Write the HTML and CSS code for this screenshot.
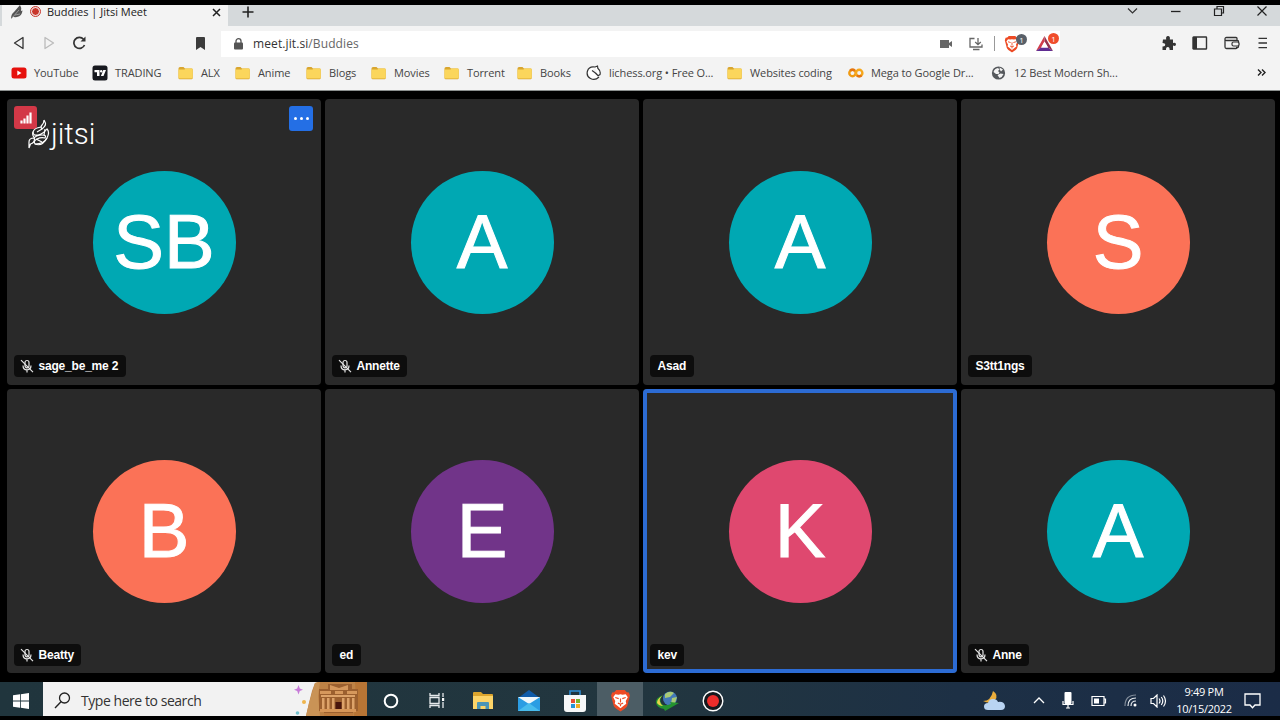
FILE: index.html
```html
<!DOCTYPE html>
<html lang="en">
<head>
    <meta charset="UTF-8">
    <meta name="viewport" content="width=device-width, initial-scale=1.0">
    <title>Buddies | Jitsi Meet</title>
    <link rel="stylesheet" href="styles.css">
</head>
<body>

    <!-- Shared icons -->
    <svg class="defs" width="0" height="0">
        <symbol id="folder" viewBox="0 0 16 14">
            <path d="M.5 2.500Q.5 1 2 1h3.500L7 2.500h6.500q1.200 0 1.200 1.200V12q0 1.200-1.200 1.200H1.700Q.5 13.200.5 12z" fill="#d9a62f"/>
            <path d="M.5 3.400h6l1-.8h6.200q1 0 1 1v7.800q0 1-1 1H1.500q-1 0-1-1z" fill="#fbd65c"/>
        </symbol>
        <symbol id="muted" viewBox="0 0 14 14">
            <g fill="none" stroke="#e6e6e6" stroke-width="1.2">
                <path d="M5 6V3.5a2 2 0 0 1 4 0V7q0 1.8-2 1.8Q5 8.8 5 6z"/>
                <path d="M3 6.5q0 4.3 4 4.3 4 0 4-4.3M7 10.8v2.7M1 1.2l12 12"/>
            </g>
        </symbol>
        <symbol id="lion" viewBox="0 0 20 22">
            <path d="M6 1h8l2 2 2 .3 1 3-.5 2L16.500 16q-.6 2-6.500 5.500Q4.100 18 3.500 16L1.500 8.300 1 6.300l1-3L4 3z" fill="#ed4a24"/>
            <path d="M5 5l3 .5 2-.5 2 .5 3-.5 2 3-2 3.500.5 2.500-2.500 2-3 2.500-3-2.500-2.500-2L5 11.500 3 8z" fill="#fff"/>
            <path d="M5 8.200l3.300 1M15 8.200l-3.300 1M10 9v4M7.500 13.500l2.500 1 2.500-1M10 14.500v2" fill="none" stroke="#ed4a24" stroke-width="1.100"/>
        </symbol>
    </svg>

    <header class="browser">
        <div class="tab-strip">
            <div class="tab">
                <svg class="feather" width="12" height="14" viewBox="0 0 12 14"><path d="M0 14Q0 9 3 7L9 0q2 3 1 6l1.500-.5Q11 11 6 12q-3 .500-4-.5z" fill="#555"/><path d="M1 13l7-8M4 10l5-1" stroke="#aaa" stroke-width=".8"/></svg>
                <span class="recording"></span>
                <span class="tab-title">Buddies | Jitsi Meet</span>
                <svg class="tab-close" width="9" height="9" viewBox="0 0 9 9"><path d="M1 1l7 7M8 1L1 8" stroke="#222" stroke-width="1.5"/></svg>
            </div>
            <svg class="new-tab" width="12" height="12" viewBox="0 0 12 12"><path d="M6 .5v11M.5 6h11" stroke="#222" stroke-width="1.600"/></svg>
            <div class="window-buttons">
                <svg width="12" height="12" viewBox="0 0 12 12"><path d="M1 3.500L5.500 8l4.500-4.500" fill="none" stroke="#333" stroke-width="1.200"/></svg>
                <svg width="12" height="12" viewBox="0 0 12 12"><path d="M1 6.500h9.500" stroke="#222" stroke-width="1.300"/></svg>
                <svg width="12" height="12" viewBox="0 0 12 12"><path d="M1.500 4h7v6.500h-7zM4 4V1.500h6.500V8H8.500" fill="none" stroke="#222" stroke-width="1.200"/></svg>
                <svg width="12" height="12" viewBox="0 0 12 12"><path d="M1.500 1.500l9 9M10.500 1.500l-9 9" stroke="#222" stroke-width="1.200"/></svg>
            </div>
        </div>

        <div class="toolbar">
            <div class="nav-buttons">
                <svg width="12" height="14" viewBox="0 0 12 14"><path d="M10 1.500v11L1.500 7z" fill="none" stroke="#333" stroke-width="1.300" stroke-linejoin="round"/></svg>
                <svg width="12" height="14" viewBox="0 0 12 14"><path d="M2 1.500v11L10.500 7z" fill="none" stroke="#bbb" stroke-width="1.300" stroke-linejoin="round"/></svg>
                <svg width="14" height="14" viewBox="0 0 14 14"><path d="M11.500 9A5.500 5.500 0 1 1 10.500 3.200" fill="none" stroke="#333" stroke-width="1.700"/><path d="M12.500 .5v5h-5z" fill="#333"/></svg>
            </div>
            <svg class="bookmark" width="9" height="13" viewBox="0 0 9 13"><path d="M0 1q0-1 1-1h7q1 0 1 1v12L4.500 10 0 13z" fill="#3b3b3b"/></svg>
            <div class="address">
                <svg width="9" height="12" viewBox="0 0 9 12"><rect y="4.500" width="9" height="7" rx="1" fill="#555"/><path d="M2 5V3a2.500 2.300 0 0 1 5 0v2" fill="none" stroke="#555" stroke-width="1.300"/></svg>
                <span class="url">meet.jit.si<span>/Buddies</span></span>
                <div class="address-icons">
                    <svg width="13" height="10" viewBox="0 0 13 10"><path d="M0 1h9v2.900L12 2v6L9 6v3H0z" fill="#666"/></svg>
                    <svg class="install" width="14" height="14" viewBox="0 0 14 14"><path d="M5.500 1.500H1v8.500h12V7.500M4 12.500h6.500M9 1v6.500M6.200 5L9 7.700 11.800 5" fill="none" stroke="#666" stroke-width="1.300"/></svg>
                    <span class="divider"></span>
                    <div class="badged shield">
                        <svg width="16" height="18" viewBox="0 0 20 22"><use href="#lion"/></svg>
                        <span class="badge">1</span>
                    </div>
                    <div class="badged rewards">
                        <svg width="17" height="15" viewBox="0 0 17 15"><path d="M8.500 0L0 15l5.500-3.500 3-6z" fill="#d13d4b"/><path d="M0 15h17l-5-3.500H5z" fill="#5f2c92"/><path d="M8.500 0L17 15l-5-3.500-3.500-6z" fill="#96334f"/><path d="M8.500 5.500L12 11.500H5z" fill="#fff"/></svg>
                        <span class="badge badge-red">1</span>
                    </div>
                </div>
            </div>
            <div class="tools">
                <svg width="14" height="14" viewBox="0 0 14 14"><path d="M1 3.500h3.200Q3.500 0 6 0t1.800 3.500H11V7q3-1 3 1.300T11 9.600V14H7.600q.2-3-1.800-3t-1.800 3H.5v-3.500q2.800.2 2.800-1.700T.5 7z" fill="#333"/></svg>
                <svg width="16" height="14" viewBox="0 0 16 14"><rect x="1" y="1" width="13.500" height="12" rx=".5" fill="none" stroke="#333" stroke-width="1.400"/><path d="M1 1h4v12H1z" fill="#333"/></svg>
                <svg width="16" height="14" viewBox="0 0 16 14"><path d="M13 4V2.500Q13 1.500 12 1.500H2.500Q1 1.500 1 3v8q0 1.500 1.500 1.500H12q1 0 1-1V11M1 3.500q0 1 1.500 1h11q1 0 1 1v5q0 1-1 1H12" fill="none" stroke="#333" stroke-width="1.300"/><rect x="8" y="6" width="7" height="4" rx="1.500" fill="#f3f3f3" stroke="#333" stroke-width="1.200"/></svg>
                <svg class="hamburger" width="12" height="14" viewBox="0 0 12 14"><path d="M1.500 2.300h8.500M1.500 7h8.500M1.500 11.700h8.500" stroke="#333" stroke-width="1.300"/></svg>
            </div>
        </div>

        <nav class="bookmarks">
            <a class="mark"><svg width="16" height="14" viewBox="0 0 16 14"><rect x=".5" y="1.500" width="15" height="11" rx="2.500" fill="#e6100c"/><path d="M6.300 4.500L10.500 7l-4.200 2.500z" fill="#fff"/></svg><span>YouTube</span></a>
            <a class="mark"><svg width="16" height="16" viewBox="0 0 16 16"><rect x=".5" y=".5" width="15" height="15" rx="2.500" fill="#17191f"/><path d="M2.500 5h5v6H5V7.300H2.500zM11.300 5H14l-2.500 6H8.900z" fill="#fff"/><circle cx="9.200" cy="6.200" r="1.200" fill="#fff"/></svg><span>TRADING</span></a>
            <a class="mark"><svg width="16" height="14"><use href="#folder"/></svg><span>ALX</span></a>
            <a class="mark"><svg width="16" height="14"><use href="#folder"/></svg><span>Anime</span></a>
            <a class="mark"><svg width="16" height="14"><use href="#folder"/></svg><span>Blogs</span></a>
            <a class="mark"><svg width="16" height="14"><use href="#folder"/></svg><span>Movies</span></a>
            <a class="mark"><svg width="16" height="14"><use href="#folder"/></svg><span>Torrent</span></a>
            <a class="mark"><svg width="16" height="14"><use href="#folder"/></svg><span>Books</span></a>
            <a class="mark"><svg width="16" height="16" viewBox="0 0 16 16"><path d="M9 2Q3 1 1.500 6t3 7.500Q9 16 13 12M9 2l2.500-1 .3 2.200Q15 6 14 9.500l-2 1.200Q10 8 6 5.500" fill="#fff" stroke="#333" stroke-width="1.200"/></svg><span>lichess.org • Free O...</span></a>
            <a class="mark"><svg width="16" height="14"><use href="#folder"/></svg><span>Websites coding</span></a>
            <a class="mark"><svg width="16" height="14" viewBox="0 0 16 14"><g fill="none" stroke-width="2.400"><circle cx="4.500" cy="7" r="3.200" stroke="#f09a12"/><circle cx="11.200" cy="7" r="3.200" stroke="#f6a71b"/><path d="M8.900 9.300a3.200 3.200 0 0 0 4.600 0M2.200 4.700a3.200 3.200 0 0 1 4.600 0" stroke="#e57411"/></g></svg><span>Mega to Google Dr...</span></a>
            <a class="mark"><svg width="16" height="16" viewBox="0 0 16 16"><circle cx="7.500" cy="8" r="6.600" fill="#55585c"/><path d="M2.500 7Q3.500 3.500 7 3l1.500 1.500L7 6l1.500 1.500-1 1.500H5zM8.500 2.500l3.500 2-2 2L9 5zM6.500 10l3-1.500 3 .5q-1 3-4 4z" fill="#f3f3f3"/></svg><span>12 Best Modern Sh...</span></a>
            <svg class="more" width="9" height="9" viewBox="0 0 9 9"><path d="M1 1.500l3 3-3 3M5 1.500l3 3-3 3" fill="none" stroke="#222" stroke-width="1.400"/></svg>
        </nav>
    </header>

    <main class="tiles">
        <section class="tile">
            <div class="signal"><svg width="14" height="14" viewBox="0 0 14 14"><path d="M2.500 9.500v3M5.500 7.500v5M8.500 4.500v8M11.500 1.500v11" stroke="#fff" stroke-width="2.200"/></svg></div>
            <div class="logo">
                <svg width="24" height="32" viewBox="0 0 24 32"><g fill="none" stroke="#fff" stroke-width="1.200"><path d="M17 2q0 3-2 5t0 4q5-4 3-7l-1-2"/><path d="M14 9q-7 1-8 5 0 4 5 3t9-6q3 3 0 9t-12 6q-2-3 2-5t8-1q2-3-3-3t-8 3"/><path d="M6 14q-1 3 1 5M7 20q-5 0-5 4l0 6 1.500-4q4-1 4-5zM8 26q7 3 12-6M10 14l5-3M18 11l-1 6M9 21l6 3"/></g></svg>
                <span>jitsi</span>
            </div>
            <div class="menu"><i></i><i></i><i></i></div>
            <div class="avatar teal">SB</div>
            <div class="name"><svg width="14" height="14"><use href="#muted"/></svg><span>sage_be_me 2</span></div>
        </section>
        <section class="tile">
            <div class="avatar teal">A</div>
            <div class="name"><svg width="14" height="14"><use href="#muted"/></svg><span>Annette</span></div>
        </section>
        <section class="tile">
            <div class="avatar teal">A</div>
            <div class="name"><span>Asad</span></div>
        </section>
        <section class="tile">
            <div class="avatar orange">S</div>
            <div class="name"><span>S3tt1ngs</span></div>
        </section>
        <section class="tile lower">
            <div class="avatar orange">B</div>
            <div class="name"><svg width="14" height="14"><use href="#muted"/></svg><span>Beatty</span></div>
        </section>
        <section class="tile lower">
            <div class="avatar purple">E</div>
            <div class="name"><span>ed</span></div>
        </section>
        <section class="tile lower active">
            <div class="avatar pink">K</div>
            <div class="name"><span>kev</span></div>
        </section>
        <section class="tile lower">
            <div class="avatar teal">A</div>
            <div class="name"><svg width="14" height="14"><use href="#muted"/></svg><span>Anne</span></div>
        </section>
    </main>

    <footer class="taskbar">
        <div class="start"><svg width="16" height="16" viewBox="0 0 16 16"><path d="M0 2.300L7 1.300v6.300H0zM7.800 1.200L16 0v7.600H7.800zM0 8.400h7v6.300l-7-1zM7.800 8.400H16V16l-8.200-1.200z" fill="#fff"/></svg></div>
        <div class="search">
            <svg width="17" height="17" viewBox="0 0 17 17"><circle cx="10.500" cy="6" r="5" fill="none" stroke="#222" stroke-width="1.300"/><path d="M7 9.800L1 16" stroke="#222" stroke-width="1.400"/></svg>
            <span>Type here to search</span>
            <svg class="highlight" width="74" height="34" viewBox="0 0 74 34">
                <path d="M5.500 3l1.300 3.500L10 7.800 6.800 9l-1.300 3.500L4.200 9 1 7.800l3.200-1.300z" fill="#c77bd8"/>
                <circle cx="11" cy="20" r="2" fill="#efb54c"/><circle cx="4.500" cy="31" r="1.800" fill="#75c2ce"/>
                <path d="M13 34l3-13 3-12 3-8 3-1h49v34z" fill="#be8245"/>
                <path d="M22 1l5-1-2 14 2 20H13l3-13z" fill="#c99356"/>
                <path d="M62 0h12v34H61l2-18z" fill="#b87535"/>
                <path d="M35 2h24v5h6v22h-5v5H31v-5h-5V7h9z" fill="#9c602f"/>
                <path d="M37 3l9 3 9-3v5H37zM27 9h11v3H27zM54 9h10v3H54zM42 9h8v3h-8z" fill="#d6985c"/>
                <path d="M28 13h34v2H28zM29 16h2.500v11H29zM34 16h2.500v11H34zM39 16h2.500v11H39zM49 16h2.500v11H49zM54 16h2.500v11H54zM59 16h2.500v11H59z" fill="#dda36a"/>
                <path d="M27 27h36v3H27z" fill="#d79657"/>
                <path d="M42.500 20h6v7h-6z" fill="#4a160d"/>
                <path d="M31 31h29v3H31z" fill="#bd7b3d"/>
            </svg>
        </div>
        <div class="apps">
            <div class="app"><svg width="16" height="16" viewBox="0 0 16 16"><circle cx="8" cy="8" r="6.300" fill="none" stroke="#fff" stroke-width="2"/></svg></div>
            <div class="app"><svg width="16" height="15" viewBox="0 0 16 15"><path d="M1 0v2.500h9V0M1 15v-2.500h9V15M1 4.500h9v6H1zM14 0v4M14 9v6" fill="none" stroke="#e6eaec" stroke-width="1.300"/><path d="M13 5h2.200v3H13z" fill="#fff"/></svg></div>
            <div class="app"><svg width="22" height="18" viewBox="0 0 22 18"><path d="M1 1q0-1 1-1h7l2 2h9q1 0 1 1v4H1z" fill="#dca52d"/><path d="M1 4h20v13H1z" fill="#fcd468"/><path d="M5 17v-6q0-1 1-1h10q1 0 1 1v6h-3.500v-3h-5v3z" fill="#4a95b6"/></svg></div>
            <div class="app"><svg width="24" height="22" viewBox="0 0 24 22"><path d="M1 8L12 0l11 8v4H1z" fill="#0e5ba9"/><path d="M1 7h22v14H1z" fill="#2b9de3"/><path d="M1 7h22L12 14z" fill="#eff7fb"/><path d="M1 21l11-8 11 8z" fill="#48bced"/></svg></div>
            <div class="app"><svg width="24" height="22" viewBox="0 0 24 22"><path d="M7 6V1h10v5" fill="none" stroke="#2f8dd3" stroke-width="1.600"/><path d="M1 5h22v14q0 3-3 3H4q-3 0-3-3z" fill="#f7f8f8"/><path d="M8 9h4v4H8z" fill="#e64f34"/><path d="M13 9h4v4h-4z" fill="#79b52b"/><path d="M8 14h4v4H8z" fill="#2495d8"/><path d="M13 14h4v4h-4z" fill="#f1ae21"/></svg></div>
            <div class="app current"><svg width="21" height="23" viewBox="0 0 20 22"><use href="#lion"/></svg></div>
            <div class="app"><svg width="24" height="20" viewBox="0 0 24 20"><circle cx="15" cy="7.500" r="7" fill="#4379b8"/><path d="M10 3q5-4 9-1l-4 4-5 1zM17 7l5-1-2 6-4 1z" fill="#a9ca76"/><path d="M8 4Q0 7 1 12t8 6l1 2 14-8-9-1 1 2Q8 16 6 12T8 4z" fill="#249330"/><path d="M7 5q-5 3-5 7 2 3 6 3Q2 10 7 5z" fill="#e5d449"/></svg></div>
            <div class="app"><svg width="22" height="22" viewBox="0 0 22 22"><circle cx="11" cy="11" r="9.800" fill="#17191e" stroke="#fff" stroke-width="1.400"/><circle cx="11" cy="11" r="6" fill="#ee2d2b"/></svg></div>
        </div>
        <div class="tray">
            <svg class="weather" width="24" height="21" viewBox="0 0 24 21"><path d="M11 1q6 4 2 9T1 11q8 0 10-10z" fill="#eaad3c"/><path d="M6 20q-4 0-4-3.500T6 13q1-4 5-4t5 3q6-1 7 4 0 4-4 4z" fill="#b9d4f2"/></svg>
            <svg class="chevron" width="14" height="9" viewBox="0 0 14 9"><path d="M2 7l5-5 5 5" fill="none" stroke="#fff" stroke-width="1.300"/></svg>
            <svg class="mic" width="12" height="17" viewBox="0 0 12 17"><rect x="2.500" y="0" width="7" height="12" rx="1" fill="#fff"/><path d="M1 9v3.500h10V9M6 12.500V16M4 16h4" fill="none" stroke="#fff" stroke-width="1.200"/></svg>
            <svg class="battery" width="16" height="12" viewBox="0 0 16 12"><path d="M1 1.500h12v9H1zM13 4h1.500v4H13z" fill="none" stroke="#fff" stroke-width="1.200"/><path d="M3 3.500h5v5H3z" fill="#fff"/></svg>
            <svg class="wifi" width="13" height="13" viewBox="0 0 13 13"><g fill="none" stroke="#e5e9ed" stroke-width="1.200"><path d="M1 12Q1 1 12 1" opacity=".5"/><path d="M4 12q0-8 8-8M7 12q0-5 5-5"/></g><circle cx="11" cy="11" r="1.500" fill="#fff"/></svg>
            <svg class="volume" width="17" height="14" viewBox="0 0 17 14"><path d="M1 4.500h2.500L7 1v12L3.500 9.500H1zM9 4.500q2 2.500 0 5M11.300 3q3 4 0 8M13.500 1.500q4 5.500 0 11" fill="none" stroke="#fff" stroke-width="1.200"/></svg>
            <div class="clock"><span>9:49 PM</span><span>10/15/2022</span></div>
            <svg class="notify" width="17" height="16" viewBox="0 0 17 16"><path d="M1 1h15v11h-5l-2.500 2.800L6 12H1z" fill="none" stroke="#fff" stroke-width="1.300"/></svg>
        </div>
    </footer>

</body>
</html>
```
FILE: styles.css
```css
body {
    margin: 0;
    padding-top: 5px;
    width: 1280px;
    height: 720px;
    box-sizing: border-box;
    overflow: hidden;
    background-color: #000;
    font-family: "Open Sans", "Noto Sans", sans-serif;
    display: flex;
    flex-direction: column;
}

svg {
    display: block;
    flex-shrink: 0;
}

.defs {
    position: absolute;
}

/* Browser chrome */
.browser {
    height: 85px;
    background-color: #f3f3f3;
    border-bottom: 1px solid #8b8f8e;
}

.tab-strip {
    height: 21px;
    display: flex;
    align-items: flex-start;
    background-color: #d5d9db;
}

.tab {
    width: 226px;
    height: 21px;
    margin-left: 2px;
    padding: 0 7px 0 9px;
    box-sizing: border-box;
    display: flex;
    align-items: flex-start;
    background-color: #f3f3f3;
}

.feather {
    margin-right: 8px;
}

.recording {
    width: 7px;
    height: 7px;
    margin: 2px 7px 0 0;
    border: 1px solid #f3f3f3;
    outline: 1px solid #c9362b;
    border-radius: 50%;
    background-color: #c9362b;
}

.tab-title {
    font-size: 11px;
    line-height: 14px;
    color: #222;
    white-space: nowrap;
}

.tab-close {
    margin: 3px 0 0 auto;
}

.new-tab {
    margin: 1px 0 0 14px;
}

.window-buttons {
    display: flex;
    gap: 31px;
    margin-left: auto;
    padding-right: 12px;
}

.toolbar {
    height: 34px;
    display: flex;
    align-items: center;
}

.nav-buttons {
    width: 183px;
    padding-left: 13px;
    display: flex;
    gap: 18px;
}

.bookmark {
    margin-right: 16px;
}

.address {
    width: 839px;
    height: 26px;
    margin-top: 1px;
    padding: 0 1px 0 13px;
    box-sizing: border-box;
    display: flex;
    align-items: center;
    background-color: #fff;
}

.url {
    margin-left: 10px;
    font-size: 12px;
    letter-spacing: 0.1px;
    color: #333;
}

.url span {
    color: #666;
}

.address-icons {
    margin-left: auto;
    display: flex;
    align-items: center;
}

.install {
    margin-left: 16px;
}

.divider {
    width: 1px;
    height: 15px;
    margin: 0 9px 0 11px;
    background-color: #999;
}

.badged {
    position: relative;
    width: 23px;
}

.rewards {
    margin-left: 9px;
}

.badge {
    position: absolute;
    top: -1px;
    right: 0;
    width: 11px;
    height: 11px;
    border-radius: 50%;
    background-color: #596069;
    color: #fff;
    font-size: 8px;
    line-height: 11px;
    text-align: center;
}

.badge-red {
    top: -3px;
    background-color: #f04d2c;
}

.tools {
    margin-left: auto;
    padding-right: 11px;
    display: flex;
    gap: 16px;
}

.hamburger {
    margin-left: 1px;
}

.bookmarks {
    height: 25px;
    padding: 0 14px 0 11px;
    display: grid;
    grid-template-columns: 81px 86px 57px 71px 65px 73px 73px 69px 141px 121px 143px 1fr auto;
    align-items: center;
}

.mark {
    display: flex;
    align-items: center;
    gap: 7px;
    font-size: 11px;
    letter-spacing: -0.1px;
    color: #444;
    white-space: nowrap;
}

/* Participants */
.tiles {
    flex: 1;
    padding: 8px 5px 9px 7px;
    display: grid;
    grid-template-columns: repeat(4, 314px);
    grid-template-rows: 286px 284px;
    gap: 4px;
    align-content: start;
}

.tile {
    position: relative;
    display: flex;
    align-items: center;
    justify-content: center;
    border-radius: 4px;
    background-color: #292929;
}

.active {
    box-shadow: inset 0 0 0 4px #2c6bd3;
}

.avatar {
    width: 143px;
    height: 143px;
    border-radius: 50%;
    color: #fff;
    font-family: "Liberation Sans", Arial, sans-serif;
    font-size: 76px;
    line-height: 141px;
    text-align: center;
    -webkit-text-stroke: 1px #fff;
}

.teal { background-color: #00a8b3; }
.orange { background-color: #fb7257; }
.purple { background-color: #713489; }
.pink { background-color: #df486f; }

.name {
    position: absolute;
    left: 7px;
    bottom: 8px;
    height: 22px;
    padding: 0 7.5px;
    display: flex;
    align-items: center;
    gap: 5px;
    border-radius: 4px;
    background-color: #0d0d0d;
    color: #fff;
    font-family: "Liberation Sans", Arial, sans-serif;
    font-size: 12px;
    letter-spacing: -0.2px;
    font-weight: bold;
    white-space: nowrap;
}

.lower .name {
    bottom: 7px;
}

.name svg {
    margin-left: -2px;
}

.signal {
    position: absolute;
    left: 7px;
    top: 7px;
    width: 23px;
    height: 23px;
    border-radius: 3px;
    background-color: #d33847;
    display: flex;
    align-items: center;
    justify-content: center;
}

.logo {
    position: absolute;
    left: 20px;
    top: 19px;
    display: flex;
    align-items: center;
    color: #fff;
    font-family: Roboto, sans-serif;
    font-size: 29.5px;
    font-weight: 300;
    line-height: 32px;
}

.menu {
    position: absolute;
    right: 8px;
    top: 7px;
    width: 24px;
    height: 25px;
    border-radius: 3px;
    background-color: #246fe5;
    display: flex;
    align-items: center;
    justify-content: center;
    gap: 3px;
}

.menu i {
    width: 3px;
    height: 3px;
    border-radius: 50%;
    background-color: #fff;
}

/* Windows taskbar */
.taskbar {
    height: 34px;
    margin-bottom: 4px;
    display: flex;
    background: linear-gradient(90deg, #20353d, #22363f 50%, #1d3045 75%, #1b2c47);
    color: #fff;
}

.start {
    width: 43px;
    padding: 3px 2px 0 0;
    box-sizing: border-box;
    display: flex;
    align-items: center;
    justify-content: center;
}

.search {
    width: 324px;
    display: flex;
    align-items: center;
    background-color: #f2f2f2;
    color: #333;
    font-size: 14px;
    letter-spacing: -0.45px;
}

.search > svg:first-child {
    margin: 2px 10px 0 11px;
}

.search span {
    padding-top: 3px;
}

.highlight {
    margin-left: auto;
}

.apps {
    display: flex;
}

.app {
    width: 46px;
    padding: 3px 0 0 1px;
    box-sizing: border-box;
    display: flex;
    align-items: center;
    justify-content: center;
}

.current {
    background-color: #4c5d65;
}

.tray {
    margin-left: auto;
    padding: 3px 19px 0 0;
    display: flex;
    align-items: center;
}

.chevron { margin-left: 26px; }
.mic { margin-left: 16px; }
.battery { margin-left: 17px; }
.wifi { margin-left: 17px; }
.volume { margin-left: 13px; }

.clock {
    width: 58px;
    margin: -2px 11px 0 8px;
    display: flex;
    flex-direction: column;
    align-items: center;
    font-size: 11px;
    letter-spacing: -0.3px;
    line-height: 17px;
}
```
